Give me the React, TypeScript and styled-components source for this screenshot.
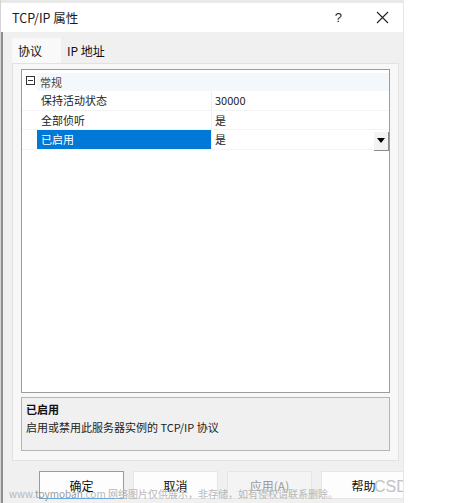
import { ReactElement } from "react";
import styled, { createGlobalStyle } from "styled-components";

interface IProp {
  name: string;
  value: string;
  selected?: boolean;
  dropdown?: boolean;
}

const props: Array<IProp> = [
  { name: "保持活动状态", value: "30000" },
  { name: "全部侦听", value: "是" },
  { name: "已启用", value: "是", selected: true, dropdown: true },
];

const buttons = [
  { label: "确定", focused: true },
  { label: "取消" },
  { label: "应用(A)", disabled: true },
  { label: "帮助" },
];

const App = (): ReactElement => {
  return (
    <>
      <GlobalStyle />
      <Page>
        <Dialog>
          <BackStrip />
          <TitleBar>
            <Title>TCP/IP 属性</Title>
            <TitleButtons>
              <HelpMark>?</HelpMark>
              <svg width="13" height="13" viewBox="0 0 13 13">
                <path d="M1 1L12 12M12 1L1 12" stroke="#222" strokeWidth="1.1" />
              </svg>
            </TitleButtons>
          </TitleBar>
          <Body>
            <Tabs>
              <Tab active>协议</Tab>
              <Tab>IP 地址</Tab>
            </Tabs>
            <Panel>
              <Grid>
                <CategoryRow>
                  <Gutter>
                    <Collapse />
                  </Gutter>
                  <CategoryName>常规</CategoryName>
                </CategoryRow>
                {props.map((p) => (
                  <PropRow key={p.name}>
                    <Gutter />
                    <NameCell selected={p.selected}>{p.name}</NameCell>
                    <ValueCell>
                      <span>{p.value}</span>
                      {p.dropdown && (
                        <DropButton>
                          <svg width="8" height="5" viewBox="0 0 8 5">
                            <path d="M0 0H8L4 5Z" fill="#000" />
                          </svg>
                        </DropButton>
                      )}
                    </ValueCell>
                  </PropRow>
                ))}
              </Grid>
              <Description>
                <DescTitle>已启用</DescTitle>
                <DescText>启用或禁用此服务器实例的 TCP/IP 协议</DescText>
              </Description>
            </Panel>
            <ButtonRow>
              {buttons.map((b) => (
                <DialogButton key={b.label} focused={b.focused} disabled={b.disabled}>
                  {b.label}
                </DialogButton>
              ))}
            </ButtonRow>
          </Body>
          <Watermark>
            www.<b>toymoban</b>.com 网络图片仅供展示，非存储，如有侵权请联系删除。
          </Watermark>
          <Csdn>CSDN</Csdn>
        </Dialog>
      </Page>
    </>
  );
};

export default App;

const GlobalStyle = createGlobalStyle`
  html, body {
    margin: 0;
    padding: 0;
    background: #ffffff;
  }
  body {
    font-family: "Noto Sans CJK SC", "Noto Sans", sans-serif;
    color: #000;
  }
`;

const Page = styled.div`
  width: 474px;
  height: 503px;
  overflow: hidden;
  display: flex;
`;

const Dialog = styled.div`
  position: relative;
  width: 402px;
  height: 503px;
  border-left: 1px solid #d4d4d4;
  border-right: 1px solid #e6e6e6;
  box-shadow: inset 2px 0 0 #8e8e8e;
  display: flex;
  flex-direction: column;
  background: #f0f0f0;
  overflow: hidden;
`;

const BackStrip = styled.div`
  height: 3px;
  background: #e9e9e9;
`;

const TitleBar = styled.div`
  height: 29px;
  background: #fff;
  display: flex;
  align-items: center;
  justify-content: space-between;
  padding: 0 14px 0 11px;
`;

const Title = styled.div`
  font-size: 12.5px;
  color: #1a1a1a;
`;

const TitleButtons = styled.div`
  display: flex;
  align-items: center;
  gap: 34px;
`;

const HelpMark = styled.span`
  font-size: 13px;
  font-family: "Liberation Sans", sans-serif;
  color: #222;
`;

const Body = styled.div`
  flex: 1;
  padding: 6px 3px 0 11px;
  display: flex;
  flex-direction: column;
`;

const Tabs = styled.div`
  display: flex;
  height: 25px;
`;

const Tab = styled.div<{ active?: boolean }>`
  padding: 0 ${(p) => (p.active ? "18px 0 6px" : "6px")};
  width: ${(p) => (p.active ? "49px" : "auto")};
  box-sizing: border-box;
  display: flex;
  align-items: center;
  font-size: 12px;
  background: ${(p) => (p.active ? "#f9f9f9" : "transparent")};
  color: #111;
`;

const Panel = styled.div`
  width: 387px;
  box-sizing: border-box;
  background: #f7f7f7;
  border: 1px solid #e2e2e2;
  padding: 5px 8px 9px 8px;
  display: flex;
  flex-direction: column;
  gap: 4px;
`;

const Grid = styled.div`
  height: 324px;
  box-sizing: border-box;
  border: 1px solid #9c9c9c;
  background: #fff;
  padding-top: 3px;
`;

const CategoryRow = styled.div`
  display: flex;
  height: 18px;
  background: #f4f7fb;
  align-items: center;
`;

const Gutter = styled.div`
  width: 15px;
  flex: none;
  display: flex;
  justify-content: center;
  align-items: center;
  background: #fff;
  align-self: stretch;
`;

const Collapse = styled.div`
  width: 7px;
  height: 7px;
  border: 1px solid #333;
  position: relative;
  margin-left: 2px;
  margin-top: -3px;
  &::after {
    content: "";
    position: absolute;
    left: 1px;
    right: 1px;
    top: 3px;
    height: 1px;
    background: #333;
  }
`;

const CategoryName = styled.div`
  font-size: 11px;
  color: #444;
  padding-left: 3px;
`;

const PropRow = styled.div`
  display: flex;
  height: 19.5px;
  box-sizing: border-box;
  border-bottom: 1px solid #f3f3f3;
`;

const NameCell = styled.div<{ selected?: boolean }>`
  width: 175px;
  flex: none;
  padding-left: 4px;
  box-sizing: border-box;
  font-size: 11px;
  display: flex;
  align-items: center;
  background: ${(p) => (p.selected ? "#0078d7" : "#fff")};
  color: ${(p) => (p.selected ? "#fff" : "#222")};
  border-right: 1px solid #f0f0f0;
`;

const ValueCell = styled.div`
  flex: 1;
  padding-left: 3px;
  font-size: 11px;
  color: #222;
  display: flex;
  align-items: center;
  justify-content: space-between;
`;

const DropButton = styled.div`
  width: 15px;
  height: 19px;
  margin-top: 4px;
  box-sizing: border-box;
  background: #f3f3f3;
  border-right: 1px solid #8a8a8a;
  border-bottom: 1px solid #8a8a8a;
  display: flex;
  align-items: center;
  justify-content: center;
`;

const Description = styled.div`
  height: 54px;
  box-sizing: border-box;
  border: 1px solid #b4b4b4;
  background: #f0f0f0;
  padding: 3px 4px;
  display: flex;
  flex-direction: column;
  gap: 2px;
`;

const DescTitle = styled.div`
  font-size: 11px;
  font-weight: bold;
  color: #111;
`;

const DescText = styled.div`
  font-size: 11px;
  color: #222;
`;

const ButtonRow = styled.div`
  display: flex;
  gap: 9px;
  padding: 10px 0 0 27px;
`;

const DialogButton = styled.div<{ focused?: boolean; disabled?: boolean }>`
  width: 85px;
  height: 28px;
  flex: none;
  box-sizing: border-box;
  display: flex;
  align-items: center;
  justify-content: center;
  font-size: 12px;
  background: ${(p) => (p.disabled ? "#f4f4f4" : "#fdfdfd")};
  border: 1px solid ${(p) => (p.focused ? "#6aa7de" : "#e6e6e6")};
  color: ${(p) => (p.disabled ? "#9a9a9a" : "#111")};
`;

const Watermark = styled.div`
  position: absolute;
  left: 8px;
  bottom: 2px;
  font-size: 10px;
  color: #b8b8b8;
  white-space: nowrap;
  b {
    font-weight: normal;
    color: #9a9a9a;
  }
`;

const Csdn = styled.div`
  position: absolute;
  left: 373px;
  bottom: 7px;
  font-family: "Liberation Sans", sans-serif;
  font-size: 16px;
  color: #c2c2c2;
  white-space: nowrap;
`;
